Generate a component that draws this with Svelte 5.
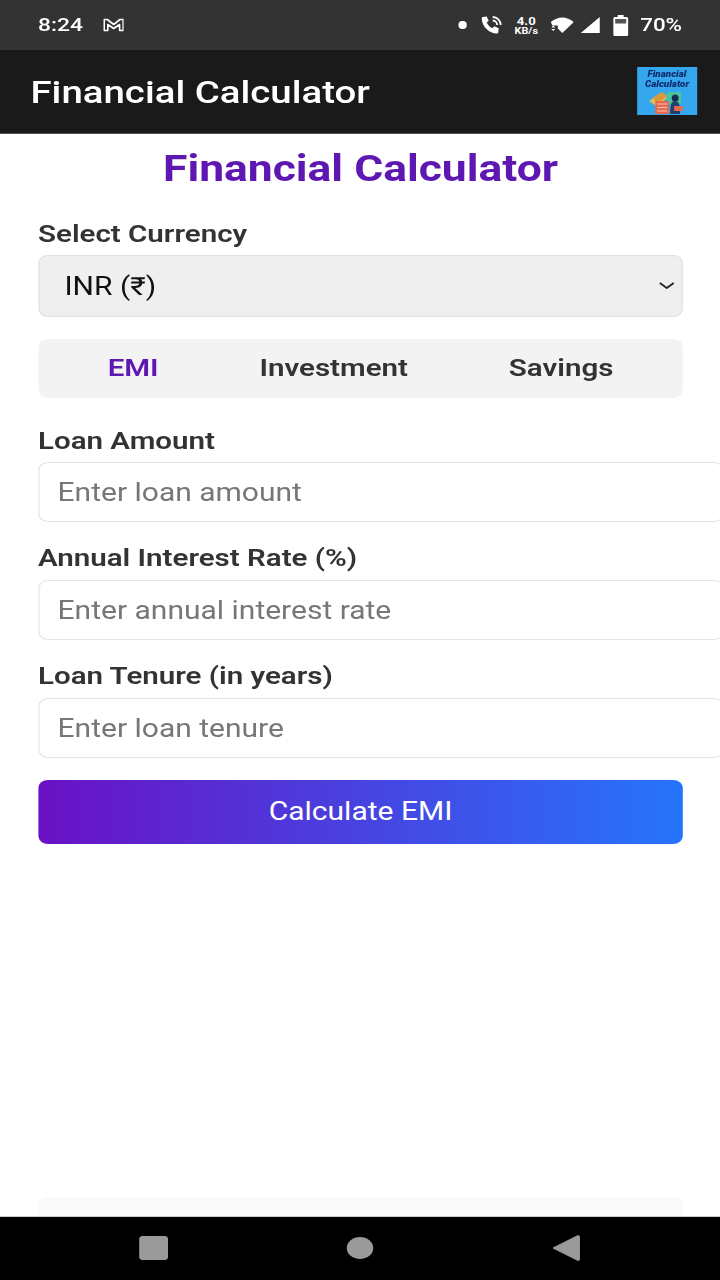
<script>
  let tabs = ['EMI', 'Investment', 'Savings'];
  let active = 'EMI';
  const fields = [
    { label: 'Loan Amount', ph: 'Enter loan amount' },
    { label: 'Annual Interest Rate (%)', ph: 'Enter annual interest rate' },
    { label: 'Loan Tenure (in years)', ph: 'Enter loan tenure' }
  ];
</script>

<div class="screen">
  <div class="status">
    <div class="st-left">
      <span class="time">8:24</span>
      <svg class="gm" width="17.500" height="14" viewBox="0 0 21 14" preserveAspectRatio="none" fill="none" stroke="#fff" stroke-width="1.600" stroke-linejoin="round"><path d="M1 1.500h3.200L10.500 6.500l6.300-5H20v11h-3.600V6.500L10.500 10.500 4.600 6.500v6H1z"/></svg>
    </div>
    <div class="st-right">
      <span class="dot"></span>
      <svg class="call" width="17.500" height="19" viewBox="0 0 21 19" preserveAspectRatio="none" fill="#fff"><path d="M1.500 1 5.500 .5l2 4.200-2 1.800c1.200 2.600 3.200 4.600 5.800 5.800l1.800-2 4.400 2-.5 4.200c-.1.700-.6 1-1.200 1C8 17.600 1.100 10.700.5 3c0-1 .3-1.900 1-2z"/><path d="M11.500 1a8 8 0 0 1 8 8M11.500 4.500a4.500 4.500 0 0 1 4.500 4.500" fill="none" stroke="#fff" stroke-width="1.800"/></svg>
      <div class="speed"><span class="sp-top">4.0</span><span class="sp-bot">KB/s</span></div>
      <svg class="wifi" width="19.200" height="18" viewBox="0 0 23 18" preserveAspectRatio="none" fill="#fff"><path d="M0 6Q11.500-3 23 6L11.500 17 7 12.500V9.500H1.500z"/><path d="M0.500 11.500 2.500 9.500 4.500 11.500zM0.500 13h4L2.500 15z"/></svg>
      <svg class="sig" width="15.800" height="16" viewBox="0 0 19 16" preserveAspectRatio="none" fill="#fff"><path d="M19 0v16H0z"/></svg>
      <svg class="bat" width="12.500" height="21" viewBox="0 0 15 21" preserveAspectRatio="none" fill="#fff"><path d="M4.500 0h6v2h3A1.500 1.500 0 0 1 15 3.500V19.500A1.500 1.500 0 0 1 13.500 21H1.500A1.500 1.500 0 0 1 0 19.500V3.500A1.500 1.500 0 0 1 1.500 2h3z"/><rect x="2" y="4" width="11" height="4.500" fill="#555"/></svg>
      <span class="pct">70%</span>
    </div>
  </div>

  <header class="bar">
    <span class="bar-title">Financial Calculator</span>
    <div class="logo">
      <span class="logo-t">Financial<br />Calculator</span>
      <svg class="logo-art" width="33.300" height="26" viewBox="0 0 40 26" preserveAspectRatio="none">
        <rect x="24" y="3" width="14" height="12" fill="#47c4a2"/>
        <path d="M6 12 17 4l7 5-10 9z" fill="#e6bd52"/>
        <path d="M9 9 19 3l5 4-9 7z" fill="#d99a3c"/>
        <rect x="12" y="12" width="14" height="13" fill="#e4694f"/>
        <path d="M14 15h10M14 18.500h10M14 22h10" stroke="#f6c3b2" stroke-width="1.200"/>
        <circle cx="32" cy="9" r="3.500" fill="#1b2a4e"/>
        <path d="M27 25c0-9 1-13 5-13s5 5 5 13z" fill="#23406f"/>
        <rect x="31" y="17" width="9" height="5" fill="#e4694f"/>
      </svg>
    </div>
  </header>

  <main class="content">
    <h1>Financial Calculator</h1>
    <label class="lbl cur" for="cur">Select Currency</label>
    <div class="sel-wrap">
      <select id="cur"><option>INR (₹)</option></select>
      <svg class="chev" width="13.300" height="7" viewBox="0 0 16 7" preserveAspectRatio="none" fill="none" stroke="#222" stroke-width="1.800"><path d="M1 1 8 6l7-5"/></svg>
    </div>

    <div class="tabs">
      {#each tabs as t}
        <span class="tab" class:active={t === active}>{t}</span>
      {/each}
    </div>

    {#each fields as f}
      <div class="field">
        <span class="lbl">{f.label}</span>
        <input type="text" placeholder={f.ph} />
      </div>
    {/each}

    <button class="calc">Calculate EMI</button>

    <div class="card"></div>
  </main>

  <nav class="nav">
    <span class="sq"></span>
    <span class="ci"></span>
    <svg width="23.300" height="26" viewBox="0 0 28 26" preserveAspectRatio="none" fill="#9a9a9a"><path d="M1 13 26 .5q1.500 0 1.500 1.500v22q0 1.500-1.500 1.500z" stroke="#9a9a9a" stroke-linejoin="round"/></svg>
  </nav>
</div>

<style>
  :global(html), :global(body) { margin: 0; background: #fff; overflow: hidden; }
  .screen {
    width: 600px; height: 1280px; overflow: hidden;
    display: flex; flex-direction: column;
    font-family: Roboto, "Liberation Sans", sans-serif;
    transform: scaleX(1.2); transform-origin: 0 0;
  }
  .status {
    height: 50px; flex: none; background: #333;
    display: flex; align-items: center; justify-content: space-between;
    padding: 0 31.670px; box-sizing: border-box; color: #fff;
  }
  .st-left { display: flex; align-items: center; gap: 16.700px; }
  .time { font-size: 19px; font-weight: 500; position: relative; top: -1px; }
  .st-right { display: flex; align-items: center; }
  .dot { width: 6.670px; height: 8px; border-radius: 50%; background: #fff; margin-right: 12px; }
  .speed { width: 19.200px; display: flex; flex-direction: column; align-items: center; margin: 2px 10.400px 0; line-height: 1; white-space: nowrap; }
  .sp-top { font-size: 11px; font-weight: 700; line-height: 10px; }
  .sp-bot { font-size: 9px; font-weight: 700; line-height: 9px; }
  .sig { margin: 0 10.800px 0 6.700px; }
  .bat { margin: 0 10px 0 0; }
  .pct { font-size: 18.600px; font-weight: 500; }
  .bar {
    height: 84px; flex: none; background: #1a1a1a; box-sizing: border-box;
    border-bottom: 1px solid #555;
    display: flex; align-items: center; justify-content: space-between;
    padding: 0 19.200px 0 25.400px;
  }
  .bar-title { color: #fff; font-size: 32px; font-weight: 500; }
  .logo {
    width: 50px; height: 48px; background: #34a7ee; margin-bottom: 1px;
    display: flex; flex-direction: column; align-items: center; position: relative;
  }
  .logo-t { font-size: 8.200px; font-weight: 900; font-style: italic; color: #0d2b6b; line-height: 10px; text-align: center; margin-top: 2px; position: relative; z-index: 1; white-space: nowrap; }
  .logo-art { position: absolute; bottom: 0; left: 5px; }
  .content {
    flex: 1; min-height: 0; display: flex; flex-direction: column;
    padding: 0 30.800px 0 31.670px;
  }
  h1 {
    margin: 13px 0 0; text-align: center; color: #5e17b0;
    font-size: 37px; font-weight: 700; line-height: 44px;
  }
  .lbl { color: #333; font-size: 24.600px; font-weight: 600; line-height: 30px; display: block; }
  .cur { margin-top: 28px; }
  .sel-wrap { position: relative; margin-top: 6px; }
  select {
    appearance: none; width: 100%; height: 62px; box-sizing: border-box;
    background: #efefef; border: 1px solid #e0e0e0; border-radius: 8px;
    padding: 0 21px; font: 400 25px Roboto, sans-serif; color: #111;
    display: block;
  }
  .chev { position: absolute; right: 6.500px; top: 27px; }
  .tabs {
    margin-top: 22px; height: 59px; background: #f3f3f3; border-radius: 8px; padding: 0 16px 2px;
    box-sizing: border-box;
    display: flex; align-items: center; justify-content: space-around;
  }
  .tab { font-size: 24.600px; font-weight: 600; color: #333; }
  .tab.active { color: #5e17b0; }
  .field { display: flex; flex-direction: column; }
  .tabs + .field { margin-top: 28px; }
  .field + .field { margin-top: 21px; }
  .field .lbl { height: 30px; margin-bottom: 7px; }
  .tabs + .field .lbl { margin-bottom: 6px; }
  input {
    box-sizing: content-box; width: 100%; height: 58px; padding: 0 16px 0 15.300px;
    border: 1px solid #e4e4e4; border-radius: 8px; background: #fff;
    font: 400 25px Roboto, sans-serif; color: #111; outline: none;
  }
  input::placeholder { color: #777; opacity: 1; }
  .calc {
    margin-top: 22px; height: 64px; border: 0; border-radius: 8px; flex: none; padding: 0 0 2px;
    background: linear-gradient(90deg, #6a11c4, #2575fc); color: #fff;
    font: 400 25px Roboto, sans-serif;
  }
  .card { margin-top: auto; height: 19px; background: #f9f9f9; border-radius: 8px 8px 0 0; flex: none; }
  .nav {
    height: 64px; flex: none; background: #000; box-sizing: border-box;
    border-top: 1px solid #ccc;
    display: flex; align-items: center; justify-content: space-between;
    padding: 0 116.500px 1px 115.800px;
  }
  .sq { width: 24px; height: 24px; background: #9a9a9a; border-radius: 3px; }
  .ci { width: 22.500px; height: 22px; background: #9a9a9a; border-radius: 50%; }
</style>
